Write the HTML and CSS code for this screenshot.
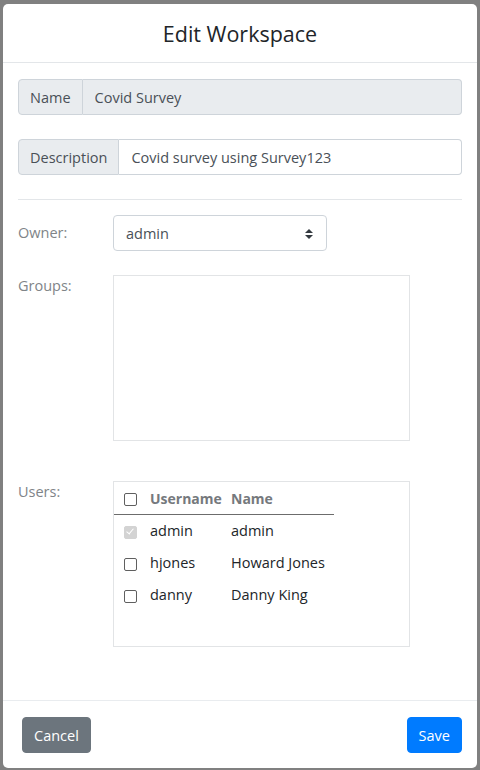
FILE: index.html
```html
<!DOCTYPE html>
<html lang="en">
<head>
<meta charset="utf-8">
<title>Edit Workspace</title>
<link rel="stylesheet" href="styles.css">
</head>
<body>
<div class="modal">
  <div class="modal-header">
    <h5 class="modal-title">Edit Workspace</h5>
  </div>
  <div class="modal-body">
    <div class="input-group">
      <span class="input-group-text">Name</span>
      <input class="form-control readonly" type="text" value="Covid Survey" readonly>
    </div>
    <div class="input-group">
      <span class="input-group-text">Description</span>
      <input class="form-control" type="text" value="Covid survey using Survey123">
    </div>
    <hr class="divider">
    <div class="form-row owner-row">
      <label class="row-label col-form-label">Owner:</label>
      <div class="custom-select">
        <span>admin</span>
        <svg class="select-arrow" width="8" height="10" viewBox="0 0 4 5"><path fill="#343a40" d="M2 0L0 2h4zm0 5L0 3h4z"/></svg>
      </div>
    </div>
    <div class="form-row groups-row">
      <label class="row-label">Groups:</label>
      <div class="list-box"></div>
    </div>
    <div class="form-row">
      <label class="row-label">Users:</label>
      <div class="list-box">
        <table class="user-table">
          <colgroup><col class="c-check"><col class="c-user"><col class="c-name"></colgroup>
          <thead>
            <tr><th><input type="checkbox" class="cb"></th><th>Username</th><th>Name</th></tr>
          </thead>
          <tbody>
            <tr><td><input type="checkbox" class="cb" checked disabled></td><td>admin</td><td>admin</td></tr>
            <tr><td><input type="checkbox" class="cb"></td><td>hjones</td><td>Howard Jones</td></tr>
            <tr><td><input type="checkbox" class="cb"></td><td>danny</td><td>Danny King</td></tr>
          </tbody>
        </table>
      </div>
    </div>
  </div>
  <div class="modal-footer">
    <button class="btn btn-secondary" type="button">Cancel</button>
    <button class="btn btn-primary" type="button">Save</button>
  </div>
</div>
</body>
</html>
```
FILE: styles.css
```css
html, body {
  margin: 0;
  padding: 0;
}
body {
  background: #808080;
  font-family: "Open Sans", "Noto Sans", "Liberation Sans", sans-serif;
  font-size: 14.5px;
  line-height: 1.5;
  color: #212529;
  height: 770px;
  overflow: hidden;
}
.modal {
  box-sizing: border-box;
  width: 474px;
  height: 764px;
  margin: 4px 0 0 3px;
  background: #fff;
  border-radius: 5px;
  display: flex;
  flex-direction: column;
}
.modal-header {
  box-sizing: border-box;
  height: 59px;
  flex: none;
  border-bottom: 1px solid #e3e6e9;
  display: flex;
  align-items: center;
  justify-content: center;
  padding-top: 2px;
}
.modal-title {
  margin: 0;
  font-size: 21.5px;
  font-weight: 400;
  line-height: 1.3;
  color: #212529;
}
.modal-body {
  flex: 1;
  padding: 16px 15px 15px;
}
.input-group {
  display: flex;
  height: 36px;
  margin-bottom: 24px;
}
.input-group-text {
  box-sizing: border-box;
  display: flex;
  align-items: center;
  padding: 1px 11px 0;
  background: #e9ecef;
  border: 1px solid #ced4da;
  border-radius: 4px 0 0 4px;
  color: #495057;
}
.form-control {
  box-sizing: border-box;
  flex: 1;
  min-width: 0;
  height: 36px;
  margin: 0;
  padding: 1px 12px 0;
  border: 1px solid #ced4da;
  border-left: 0;
  border-radius: 0 4px 4px 0;
  font: inherit;
  color: #495057;
  background: #fff;
  outline: none;
}
.form-control.readonly {
  background: #e9ecef;
}
.divider {
  margin: 0 0 15px;
  border: 0;
  border-top: 1px solid #e3e6e9;
  height: 0;
}
.form-row {
  display: flex;
  align-items: flex-start;
}
.owner-row {
  margin-bottom: 24px;
}
.groups-row {
  margin-bottom: 40px;
}
.row-label {
  width: 95px;
  flex: none;
  color: #808488;
}
.col-form-label {
  padding-top: 7px;
}
.custom-select {
  box-sizing: border-box;
  width: 214px;
  height: 36px;
  padding: 1px 12px 0;
  border: 1px solid #ced4da;
  border-radius: 4px;
  display: flex;
  align-items: center;
  justify-content: space-between;
  color: #495057;
}
.select-arrow {
  width: 8px;
  height: 10px;
  margin-right: 1px;
}
.list-box {
  box-sizing: border-box;
  width: 297px;
  height: 166px;
  border: 1px solid #e2e4e6;
}
.user-table {
  border-collapse: collapse;
  table-layout: fixed;
  width: 220px;
}
.c-check { width: 30px; }
.c-user { width: 81px; }
.c-name { width: 109px; }
.user-table th,
.user-table td {
  height: 32px;
  padding: 0 6px;
  text-align: left;
  white-space: nowrap;
  vertical-align: middle;
}
.user-table th:first-child,
.user-table td:first-child {
  padding-left: 10px;
  padding-right: 0;
}
.user-table th {
  font-weight: 700;
  font-size: 14px;
  color: #75797d;
  border-bottom: 1px solid #6c6c6c;
  height: 32px;
}
.cb {
  -webkit-appearance: none;
  appearance: none;
  box-sizing: border-box;
  display: block;
  width: 13px;
  height: 13px;
  margin: 2px 0 0;
  border: 1.5px solid #5f5f5f;
  border-radius: 2px;
  background: #fff;
  position: relative;
}
.cb:checked:disabled {
  background: #d3d3d3;
  border-color: #d3d3d3;
}
.cb:checked::after {
  content: "";
  position: absolute;
  left: 3px;
  top: 0.5px;
  width: 3px;
  height: 6px;
  border: solid #fff;
  border-width: 0 1.5px 1.5px 0;
  transform: rotate(40deg);
}
.modal-footer {
  flex: none;
  display: flex;
  justify-content: space-between;
  border-top: 1px solid #e9ecef;
  padding: 12px 11px 11px 15px;
}
.btn {
  box-sizing: border-box;
  height: 36px;
  margin: 4px;
  padding: 1px 11px 0;
  border: 1px solid transparent;
  border-radius: 4px;
  font: inherit;
  color: #fff;
  cursor: pointer;
}
.btn-secondary {
  background: #6c757d;
  border-color: #6c757d;
}
.btn-primary {
  background: #007bff;
  border-color: #007bff;
}
```
